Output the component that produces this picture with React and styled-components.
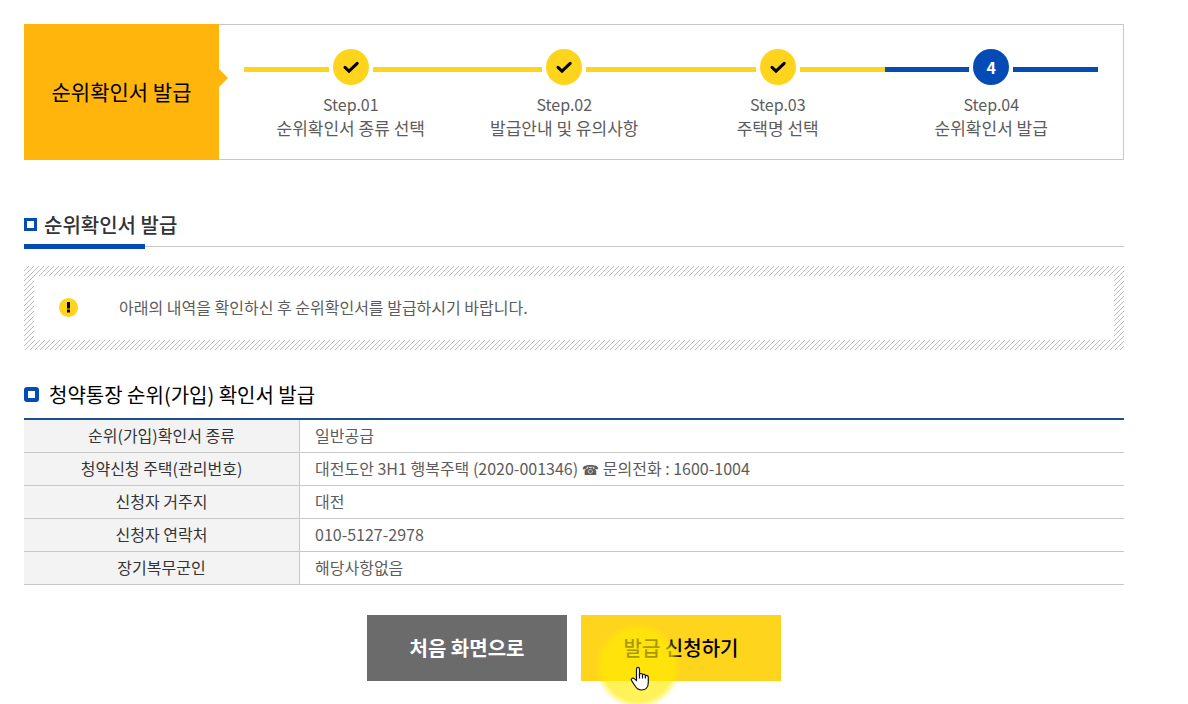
import React from 'react';
import styled, { createGlobalStyle, ThemeProvider } from 'styled-components';

const theme = {
	color: {
		blue: '#044bb5',
		yellow: '#ffd41c',
		orange: '#ffb50c',
		line: '#c8c8c8',
		text: '#5c5c5c',
		dark: '#333333',
		gray: '#6b6b6b'
	}
};

const GlobalStyle = createGlobalStyle`
	* {
		box-sizing: border-box;
	}

	body {
		margin: 0;
		background: #ffffff;
		color: #5c5c5c;
		font-family: 'Noto Sans CJK KR', 'Noto Sans', sans-serif;
		font-size: 16px;
		line-height: 24px;
	}
`;

const Page = styled.main`
	display: flex;
	flex-direction: column;
	padding: 24px 64px 23px 24px;
`;

const StepBox = styled.section`
	display: flex;
	border: 1px solid ${props => props.theme.color.line};
	border-left: 0;
`;

const StepTitle = styled.h1`
	position: relative;
	display: flex;
	align-items: center;
	justify-content: center;
	flex: 0 0 195px;
	margin: -1px 0;
	padding-bottom: 3px;
	background: ${props => props.theme.color.orange};
	color: #000000;
	font-size: 21px;
	font-weight: 400;

	&::after {
		content: '';
		position: absolute;
		top: 45px;
		left: 100%;
		border: 9px solid transparent;
		border-left-color: ${props => props.theme.color.orange};
		border-right-width: 0;
	}
`;

const StepList = styled.ol`
	display: flex;
	flex: 1;
	margin: 0;
	padding: 24px 25px 19px;
	list-style: none;
`;

const StepItem = styled.li`
	flex: 1 1 0;
	color: ${props => props.theme.color.text};
	font-size: 17px;
	text-align: center;
`;

const Rail = styled.div`
	display: flex;
	gap: 4px;
	margin-bottom: 7px;

	&::before,
	&::after {
		content: '';
		flex: 1;
		height: 5px;
		margin-top: 18px;
		background: ${props => props.$current ? props.theme.color.blue : props.theme.color.yellow};
	}
`;

const StepMark = styled.span`
	display: flex;
	align-items: center;
	justify-content: center;
	width: 36px;
	height: 36px;
	border-radius: 50%;
	background: ${props => props.$current ? props.theme.color.blue : props.theme.color.yellow};
	color: #ffffff;
	font-size: 16px;
	font-weight: 700;
`;

const StepName = styled.span`
	display: block;
	font-size: 16px;
`;

const StepLabel = styled.span`
	display: block;
`;

const SectionHeading = styled.h2`
	position: relative;
	display: flex;
	align-items: center;
	gap: 7px;
	margin: 49px 0 0;
	padding-bottom: 6px;
	border-bottom: 1px solid ${props => props.theme.color.line};
	color: ${props => props.theme.color.dark};
	font-size: 20px;
	font-weight: 500;
	line-height: 31px;

	&::after {
		content: '';
		position: absolute;
		bottom: -3px;
		left: 0;
		width: 121px;
		height: 5px;
		background: ${props => props.theme.color.blue};
	}
`;

const SubHeading = styled.h3`
	display: flex;
	align-items: center;
	gap: 10px;
	margin: 29px 0 8px;
	color: #000000;
	font-size: 20px;
	font-weight: 400;
	line-height: 31px;
`;

const Bullet = styled.span`
	width: ${props => props.$round ? '15px' : '13px'};
	height: ${props => props.$round ? '15px' : '13px'};
	border: ${props => props.$round ? '4px' : '3px'} solid ${props => props.theme.color.blue};
	border-radius: ${props => props.$round ? '3px' : '0'};
`;

const Notice = styled.div`
	margin-top: 19px;
	padding: 10px;
	background: linear-gradient(135deg, #ffffff 45%, #bdbdbd 45% 55%, #ffffff 55%) 0 0 / 5px 5px;
`;

const NoticeInner = styled.p`
	display: flex;
	align-items: center;
	gap: 41px;
	margin: 0;
	padding: 20px 25px 21px;
	background: #ffffff;
	line-height: 23px;
`;

const DataTable = styled.table`
	width: 100%;
	border-collapse: separate;
	border-spacing: 0;
	border-top: 2px solid #1b4f8c;
	table-layout: fixed;

	th,
	td {
		height: 33px;
		padding: 0 15px 2px;
		border-bottom: 1px solid ${props => props.theme.color.line};
		font-weight: 400;
	}

	th {
		width: 276px;
		border-right: 1px solid ${props => props.theme.color.line};
		background: #f3f3f3;
		color: ${props => props.theme.color.dark};
		text-align: center;
	}
`;

const PhoneSign = styled.span`
	font-family: 'DejaVu Sans', sans-serif;
	font-size: 14px;
	line-height: 1;
`;

const ButtonRow = styled.div`
	display: flex;
	justify-content: center;
	gap: 14px;
	margin-top: 30px;
`;

const Button = styled.button`
	position: relative;
	width: 200px;
	height: 66px;
	padding: 0 0 2px;
	border: 0;
	background: ${props => props.$primary ? props.theme.color.yellow : props.theme.color.gray};
	color: ${props => props.$primary ? '#000000' : '#ffffff'};
	font-family: inherit;
	font-size: 20px;
	font-weight: ${props => props.$primary ? 500 : 700};
	cursor: pointer;
`;

const Spotlight = styled.span`
	position: absolute;
	top: 8px;
	left: 14px;
	width: 86px;
	height: 86px;
	border-radius: 50%;
	background: radial-gradient(circle closest-side, rgba(255, 236, 0, 0.65) 82%, rgba(255, 236, 0, 0) 100%);
	pointer-events: none;
`;

const Pointer = styled.svg`
	position: absolute;
	top: 51px;
	left: 49px;
	pointer-events: none;
`;

const CheckIcon = () => (
	<svg width="18" height="14" viewBox="0 0 18 14" aria-hidden="true">
		<path d="M3 7.4 L7 11.2 L15.2 3.4" fill="none" stroke="#000" strokeWidth="3" strokeLinecap="round" />
	</svg>
);

const AlertIcon = () => (
	<svg width="19" height="19" viewBox="0 0 19 19" aria-hidden="true">
		<circle cx="9.5" cy="9.5" r="9.5" fill={theme.color.yellow} />
		<path d="M8 4h3v6.5H8zM8 11.5h3v3H8z" fill="#000" />
	</svg>
);

const HandPointer = () => (
	<Pointer width="20" height="26" viewBox="0 0 20 26" aria-hidden="true">
		<path
			d="M6.5 14.5V3.2C6.5 .8 9.5.8 9.5 3.2V8.2C10.5 7 12.3 7.4 12.5 8.8C13.5 7.8 15.2 8.2 15.4 9.8C16.5 9 18.3 9.6 18.3 11.3V16.5C18.3 21.5 15.5 24 11.5 24C7.5 24 5.8 21.5 4.3 18.8L1.6 14.6C.5 12.6 2.7 11.4 4.2 12.6Z"
			fill="#fff"
			stroke="#111"
			strokeWidth="1.2"
		/>
		<path d="M9.5 8V12.5M12.5 9V12.5M15.4 10V12.5" stroke="#111" strokeWidth="1.2" />
	</Pointer>
);

const steps = [
	{ name: 'Step.01', label: '순위확인서 종류 선택' },
	{ name: 'Step.02', label: '발급안내 및 유의사항' },
	{ name: 'Step.03', label: '주택명 선택' },
	{ name: 'Step.04', label: '순위확인서 발급', current: true }
];

const rows = [
	{ title: '순위(가입)확인서 종류', value: '일반공급' },
	{
		title: '청약신청 주택(관리번호)',
		value: <>대전도안 3H1 행복주택 (2020-001346) <PhoneSign>☎</PhoneSign> 문의전화 : 1600-1004</>
	},
	{ title: '신청자 거주지', value: '대전' },
	{ title: '신청자 연락처', value: '010-5127-2978' },
	{ title: '장기복무군인', value: '해당사항없음' }
];

const Step = ({ name, label, current, number }) => (
	<StepItem aria-current={current ? 'step' : undefined}>
		<Rail $current={current}>
			<StepMark $current={current}>{current ? number : <CheckIcon />}</StepMark>
		</Rail>
		<StepName>{name}</StepName>
		<StepLabel>{label}</StepLabel>
	</StepItem>
);

const App = () => (
	<ThemeProvider theme={theme}>
		<GlobalStyle />
		<Page>
			<StepBox>
				<StepTitle>순위확인서 발급</StepTitle>
				<StepList>
					{steps.map((step, i) => (
						<Step key={step.name} number={i + 1} {...step} />
					))}
				</StepList>
			</StepBox>

			<SectionHeading>
				<Bullet />
				순위확인서 발급
			</SectionHeading>
			<Notice>
				<NoticeInner>
					<AlertIcon />
					아래의 내역을 확인하신 후 순위확인서를 발급하시기 바랍니다.
				</NoticeInner>
			</Notice>

			<SubHeading>
				<Bullet $round />
				청약통장 순위(가입) 확인서 발급
			</SubHeading>
			<DataTable>
				<tbody>
					{rows.map(row => (
						<tr key={row.title}>
							<th scope="row">{row.title}</th>
							<td>{row.value}</td>
						</tr>
					))}
				</tbody>
			</DataTable>

			<ButtonRow>
				<Button type="button">처음 화면으로</Button>
				<Button type="button" $primary>
					발급 신청하기
					<Spotlight />
					<HandPointer />
				</Button>
			</ButtonRow>
		</Page>
	</ThemeProvider>
);

export default App;
